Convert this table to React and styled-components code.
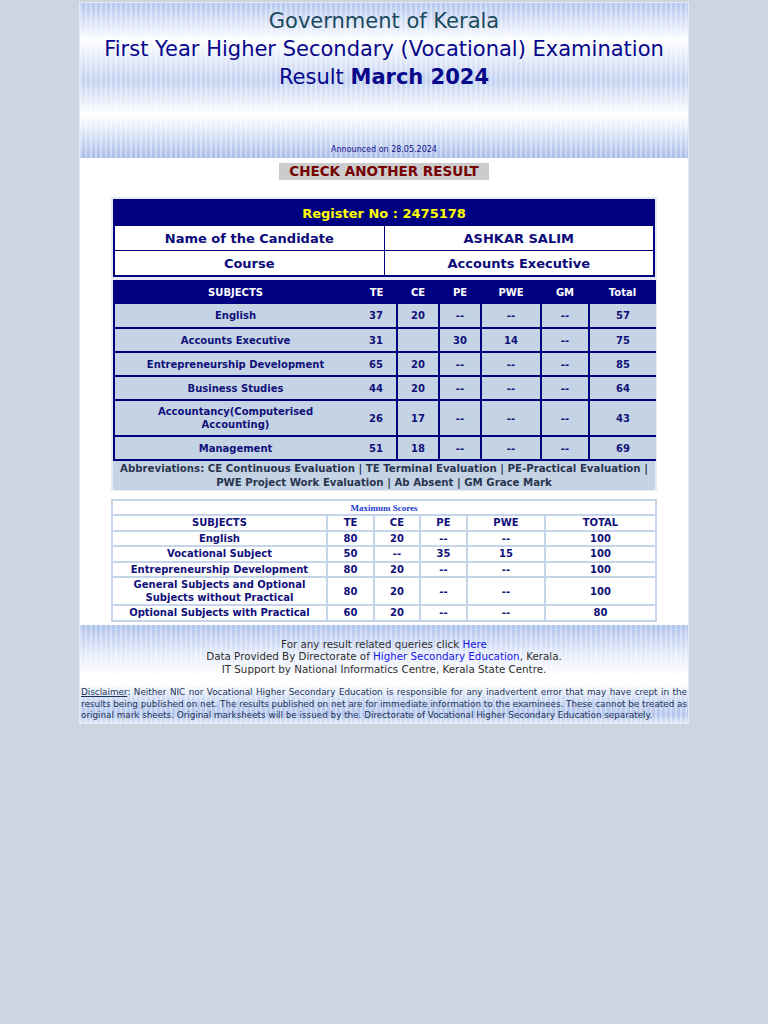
import React from "react";
import styled, { createGlobalStyle } from "styled-components";

const GlobalStyle = createGlobalStyle`
  body {
    margin: 0;
    background: #cdd5e1;
    font-family: "DejaVu Sans", Verdana, sans-serif;
  }
`;

const stripes = `repeating-linear-gradient(90deg, rgba(255,255,255,0.35) 0 2px, rgba(255,255,255,0) 2px 5px)`;

const marks = [
  ["English", "37", "20", "--", "--", "--", "57"],
  ["Accounts Executive", "31", "", "30", "14", "--", "75"],
  ["Entrepreneurship Development", "65", "20", "--", "--", "--", "85"],
  ["Business Studies", "44", "20", "--", "--", "--", "64"],
  ["Accountancy(Computerised Accounting)", "26", "17", "--", "--", "--", "43"],
  ["Management", "51", "18", "--", "--", "--", "69"],
];

const maxScores = [
  ["English", "80", "20", "--", "--", "100"],
  ["Vocational Subject", "50", "--", "35", "15", "100"],
  ["Entrepreneurship Development", "80", "20", "--", "--", "100"],
  ["General Subjects and Optional Subjects without Practical", "80", "20", "--", "--", "100"],
  ["Optional Subjects with Practical", "60", "20", "--", "--", "80"],
];

const App = () => {
  return (
    <>
      <GlobalStyle />
      <Page>
        <Header>
          <GovLine>Government of Kerala</GovLine>
          <TitleLine>First Year Higher Secondary (Vocational) Examination</TitleLine>
          <TitleLine>
            Result <b>March 2024</b>
          </TitleLine>
          <Announced>Announced on 28.05.2024</Announced>
        </Header>

        <ButtonRow>
          <CheckButton>CHECK ANOTHER RESULT</CheckButton>
        </ButtonRow>

        <ResultBox>
          <InfoTable>
            <tbody>
              <tr>
                <RegisterCell colSpan={2}>Register No : 2475178</RegisterCell>
              </tr>
              <tr>
                <InfoCell>Name of the Candidate</InfoCell>
                <InfoCell>ASHKAR SALIM</InfoCell>
              </tr>
              <tr>
                <InfoCell>Course</InfoCell>
                <InfoCell>Accounts Executive</InfoCell>
              </tr>
            </tbody>
          </InfoTable>

          <MarksTable>
            <colgroup>
              <col style={{ width: 242 }} />
              <col style={{ width: 41 }} />
              <col style={{ width: 42 }} />
              <col style={{ width: 42 }} />
              <col style={{ width: 60 }} />
              <col style={{ width: 48 }} />
              <col style={{ width: 67 }} />
            </colgroup>
            <thead>
              <tr>
                {["SUBJECTS", "TE", "CE", "PE", "PWE", "GM", "Total"].map((h) => (
                  <MarksHead key={h}>{h}</MarksHead>
                ))}
              </tr>
            </thead>
            <tbody>
              {marks.map((row) => (
                <MarksRow key={row[0]} $tall={row[0].length > 30}>
                  {row.map((c, i) => (
                    <MarksCell key={i} $first={i === 0}>
                      {c}
                    </MarksCell>
                  ))}
                </MarksRow>
              ))}
            </tbody>
          </MarksTable>

          <Abbrev>
            Abbreviations: CE Continuous Evaluation | TE Terminal Evaluation | PE-Practical Evaluation |
            <br />
            PWE Project Work Evaluation | Ab Absent | GM Grace Mark
          </Abbrev>
        </ResultBox>

        <MaxTable>
          <colgroup>
            <col style={{ width: 215 }} />
            <col style={{ width: 47 }} />
            <col style={{ width: 46 }} />
            <col style={{ width: 47 }} />
            <col style={{ width: 78 }} />
            <col style={{ width: 111 }} />
          </colgroup>
          <tbody>
            <tr>
              <MaxTitle colSpan={6}>Maximum Scores</MaxTitle>
            </tr>
            <tr>
              {["SUBJECTS", "TE", "CE", "PE", "PWE", "TOTAL"].map((h) => (
                <MaxCell key={h}>{h}</MaxCell>
              ))}
            </tr>
            {maxScores.map((row) => (
              <tr key={row[0]}>
                {row.map((c, i) => (
                  <MaxCell key={i} $wrap={i === 0}>
                    {c}
                  </MaxCell>
                ))}
              </tr>
            ))}
          </tbody>
        </MaxTable>

        <Footer>
          <FooterLines>
            For any result related queries click <Link href="#">Here</Link>
            <br />
            Data Provided By Directorate of <Link href="#">Higher Secondary Education</Link>, Kerala.
            <br />
            IT Support by National Informatics Centre, Kerala State Centre.
          </FooterLines>
          <Disclaimer>
            <u>Disclaimer</u>: Neither NIC nor Vocational Higher Secondary Education is responsible for any
            inadvertent error that may have crept in the results being published on net. The results published on
            net are for immediate information to the examinees. These cannot be treated as original mark sheets.
            Original marksheets will be issued by the. Directorate of Vocational Higher Secondary Education
            separately.
          </Disclaimer>
        </Footer>
      </Page>
    </>
  );
};

export default App;

const Page = styled.div`
  box-sizing: border-box;
  width: 610px;
  margin: 2px auto 0;
  background: #ffffff;
  border: 1px solid #e4e9f2;
`;

const Header = styled.div`
  height: 155px;
  display: flex;
  flex-direction: column;
  align-items: center;
  padding-top: 4px;
  box-sizing: border-box;
  background: ${stripes},
    linear-gradient(
      180deg,
      #b4c6ee 0%,
      #e4ebfa 16%,
      #ffffff 24%,
      #c3d2f1 50%,
      #ffffff 72%,
      #e8eefb 80%,
      #a9bde9 100%
    );
`;

const GovLine = styled.div`
  font-family: "DejaVu Sans", Tahoma, sans-serif;
  font-size: 21px;
  line-height: 28px;
  color: #1b4a5e;
`;

const TitleLine = styled.div`
  font-family: "DejaVu Sans", Tahoma, sans-serif;
  font-size: 21px;
  line-height: 28px;
  color: #07078c;

  b {
    font-weight: bold;
  }
`;

const Announced = styled.div`
  margin-top: auto;
  margin-bottom: 4px;
  font-size: 8px;
  color: #10108a;
`;

const ButtonRow = styled.div`
  display: flex;
  justify-content: center;
  margin-top: 5px;
`;

const CheckButton = styled.button`
  height: 17px;
  padding: 0 10px;
  border: none;
  background: #cccccc;
  color: #760000;
  font-family: "DejaVu Sans", Verdana, sans-serif;
  font-weight: bold;
  font-size: 13.5px;
  line-height: 17px;
  cursor: pointer;
`;

const ResultBox = styled.div`
  width: 546px;
  margin: 17px auto 0;
  box-sizing: border-box;
  padding: 2px 2px 1px;
  background: #e6e9f8;
`;

const InfoTable = styled.table`
  width: 100%;
  border-collapse: collapse;
  border: 2px solid #000080;
`;

const RegisterCell = styled.td`
  height: 24px;
  background: #000080;
  color: #ffff00;
  font-weight: bold;
  font-size: 13px;
  text-align: center;
  padding: 0;
`;

const InfoCell = styled.td`
  width: 50%;
  height: 24px;
  border: 1px solid #000080;
  background: #ffffff;
  color: #0a0a7a;
  font-weight: bold;
  font-size: 13px;
  text-align: center;
  padding: 0;
`;

const MarksTable = styled.table`
  width: 100%;
  margin-top: 3px;
  border-collapse: collapse;
  table-layout: fixed;
  border-left: 2px solid #000080;
`;

const MarksHead = styled.th`
  height: 24px;
  background: #000080;
  color: #ffffff;
  font-size: 10px;
  font-weight: bold;
  padding: 0;
`;

const MarksRow = styled.tr`
  height: ${(p) => (p.$tall ? "36px" : "24px")};
`;

const MarksCell = styled.td`
  background: #c4d4e4;
  color: #10107a;
  font-size: 10px;
  font-weight: bold;
  text-align: center;
  line-height: 13px;
  padding: 0 ${(p) => (p.$first ? "28px" : "0")};
  border-bottom: 2px solid #000080;
  border-right: ${(p) => (p.$first ? "none" : "2px solid #000080")};

  &:last-child {
    border-right: none;
  }
`;

const Abbrev = styled.div`
  background: #c4d4e4;
  color: #2a3550;
  font-size: 10.2px;
  font-weight: bold;
  text-align: center;
  line-height: 13.5px;
  padding: 1px 0 1px;
`;

const MaxTable = styled.table`
  width: 546px;
  margin: 8px auto 0;
  border-collapse: collapse;
  table-layout: fixed;
  border: 2px solid #c5d6ea;
`;

const MaxTitle = styled.td`
  height: 13px;
  border: 2px solid #c5d6ea;
  font-family: "Liberation Serif", "Times New Roman", serif;
  font-size: 9px;
  font-weight: bold;
  color: #1c3ad0;
  text-align: center;
  padding: 0;
  line-height: 12px;
`;

const MaxCell = styled.td`
  height: 13.5px;
  border: 2px solid #c5d6ea;
  color: #10107a;
  font-size: 10px;
  font-weight: bold;
  text-align: center;
  line-height: 13px;
  padding: ${(p) => (p.$wrap ? "0 14px" : "0")};
`;

const Footer = styled.div`
  margin-top: 3px;
  height: 98px;
  box-sizing: border-box;
  padding: 13px 1px 0;
  background: ${stripes},
    linear-gradient(180deg, #aec2ec 0%, #e6ecfa 30%, #ffffff 52%, #ffffff 60%, #c2d1f1 80%, #b4c6ee 92%, #dfe7f8 100%);
`;

const FooterLines = styled.div`
  text-align: center;
  font-size: 10.3px;
  line-height: 12.5px;
  color: #2e2e2e;
`;

const Link = styled.a`
  color: #1515ee;
  text-decoration: none;
`;

const Disclaimer = styled.div`
  margin-top: 12px;
  font-size: 8.8px;
  line-height: 11.5px;
  color: #1d3558;
  text-align: justify;
`;
